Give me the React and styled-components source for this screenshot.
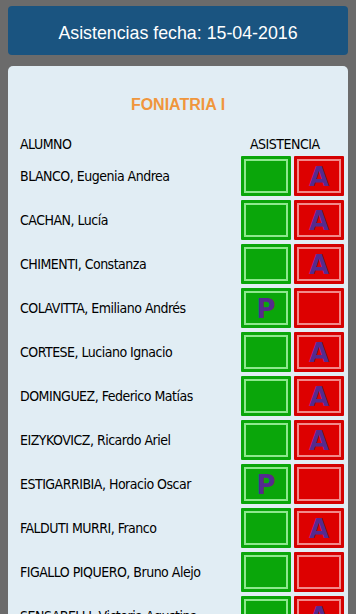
import React from 'react'
import styled, { createGlobalStyle } from 'styled-components'

const GlobalStyle = createGlobalStyle`
  html, body {
    margin: 0;
    background: #6b6b6b;
  }
  body {
    padding: 6px 8px 0;
    font-family: "DejaVu Sans Condensed", "DejaVu Sans", sans-serif;
  }
`

const alumnos = [
  { nombre: 'BLANCO, Eugenia Andrea', estado: 'A' },
  { nombre: 'CACHAN, Lucía', estado: 'A' },
  { nombre: 'CHIMENTI, Constanza', estado: 'A' },
  { nombre: 'COLAVITTA, Emiliano Andrés', estado: 'P' },
  { nombre: 'CORTESE, Luciano Ignacio', estado: 'A' },
  { nombre: 'DOMINGUEZ, Federico Matías', estado: 'A' },
  { nombre: 'EIZYKOVICZ, Ricardo Ariel', estado: 'A' },
  { nombre: 'ESTIGARRIBIA, Horacio Oscar', estado: 'P' },
  { nombre: 'FALDUTI MURRI, Franco', estado: 'A' },
  { nombre: 'FIGALLO PIQUERO, Bruno Alejo', estado: '' },
  { nombre: 'SENSABELLI, Victoria Agustina', estado: 'A' },
]

function App() {
  return (
    <Page>
      <GlobalStyle />
      <Header>Asistencias fecha: 15-04-2016</Header>
      <Panel>
        <Materia>FONIATRIA I</Materia>
        <Table>
          <HeadCell>ALUMNO</HeadCell>
          <HeadCell $asist>ASISTENCIA</HeadCell>
          {alumnos.map((a) => (
            <React.Fragment key={a.nombre}>
              <Name>{a.nombre}</Name>
              <Mark $color="green">{a.estado === 'P' ? 'P' : ''}</Mark>
              <Mark $color="red">{a.estado === 'A' ? 'A' : ''}</Mark>
            </React.Fragment>
          ))}
        </Table>
      </Panel>
    </Page>
  )
}

const Page = styled.div`
  display: flex;
  flex-direction: column;
  gap: 11px;
`

const Header = styled.div`
  height: 49px;
  background: #1a5480;
  border-radius: 4px;
  color: #fff;
  font-family: "Liberation Sans", Arial, sans-serif;
  font-size: 17.8px;
  display: flex;
  align-items: center;
  justify-content: center;
  padding-top: 5px;
  box-sizing: border-box;
`

const Panel = styled.div`
  background: #e1edf4;
  border-radius: 5px 5px 0 0;
  padding: 30px 4px 0 12px;
`

const Materia = styled.div`
  text-align: center;
  color: #f0963c;
  font-family: "Liberation Sans", Arial, sans-serif;
  font-weight: bold;
  font-size: 16px;
  padding-right: 8px;
  margin-bottom: 23px;
`

const Table = styled.div`
  display: grid;
  grid-template-columns: 1fr 50px 50px;
  column-gap: 3px;
  row-gap: 4px;
  align-items: center;
`

const HeadCell = styled.div`
  grid-column: ${(p) => (p.$asist ? '2 / 4' : '1')};
  font-size: 14px;
  letter-spacing: -0.5px;
  color: #000;
  padding-left: ${(p) => (p.$asist ? '9px' : '0')};
  height: 15px;
  line-height: 15px;
`

const Name = styled.div`
  font-size: 14px;
  letter-spacing: -0.5px;
  color: #000;
`

const Mark = styled.div`
  height: 40px;
  box-sizing: border-box;
  background: ${(p) => (p.$color === 'green' ? '#0aa60a' : '#dd0000')};
  border: 3px solid ${(p) => (p.$color === 'green' ? '#0aa60a' : '#d40000')};
  display: flex;
  align-items: center;
  justify-content: center;
  color: #552a8f;
  font-family: "DejaVu Sans", sans-serif;
  font-weight: bold;
  font-size: 26px;
  line-height: 1;
  padding-top: 1px;
  box-shadow: inset 0 0 0 2px ${(p) => (p.$color === 'green' ? '#8ee88e' : '#f28a8a')};
  border-radius: 1px;
`

export default App
